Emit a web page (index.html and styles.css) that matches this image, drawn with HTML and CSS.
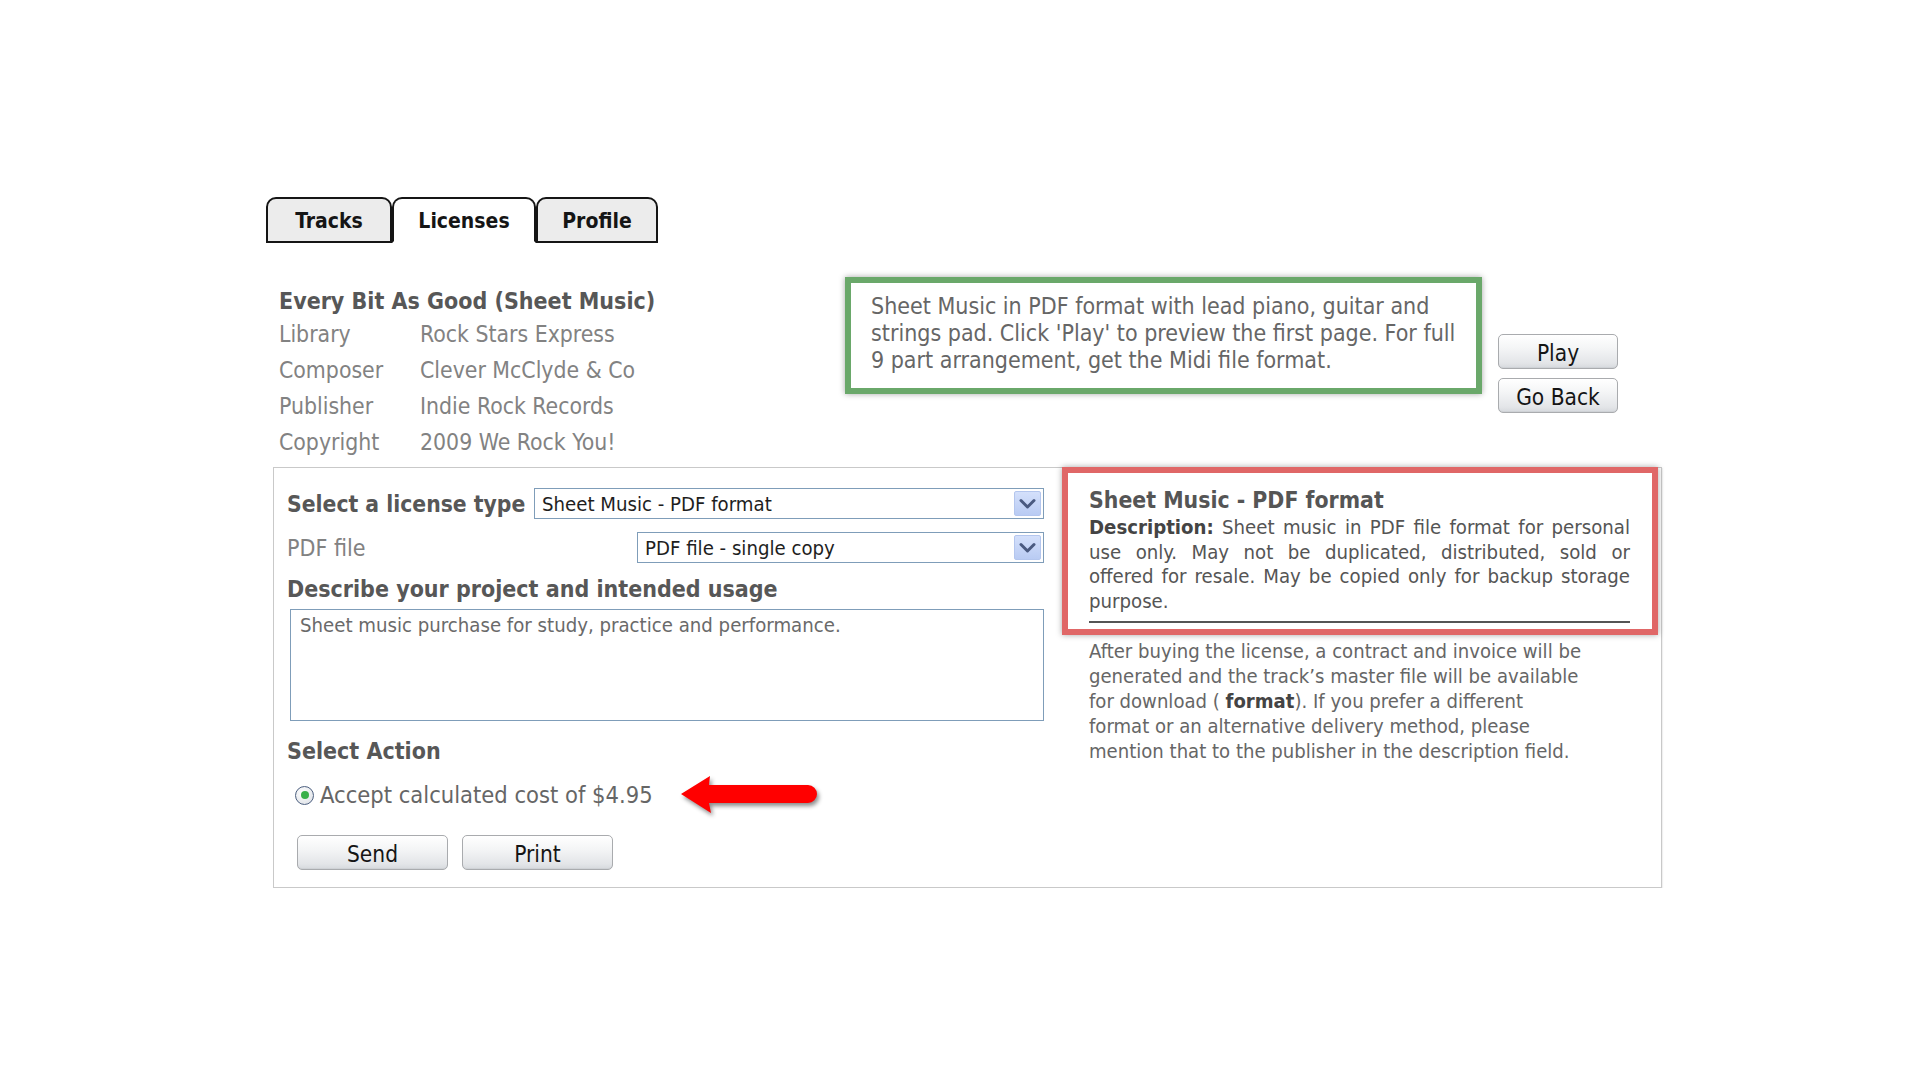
FILE: index.html
```html
<!DOCTYPE html>
<html lang="en">
<head>
<meta charset="utf-8">
<title>Licenses</title>
<link rel="stylesheet" href="styles.css">
</head>
<body>
<div class="page">
  <div class="tabs">
    <div class="tab tab-tracks">Tracks</div>
    <div class="tab tab-licenses active">Licenses</div>
    <div class="tab tab-profile">Profile</div>
  </div>

  <div class="top">
    <div class="info">
      <div class="title">Every Bit As Good (Sheet Music)</div>
      <div class="row"><span class="lbl">Library</span><span class="val">Rock Stars Express</span></div>
      <div class="row"><span class="lbl">Composer</span><span class="val">Clever McClyde &amp; Co</span></div>
      <div class="row"><span class="lbl">Publisher</span><span class="val">Indie Rock Records</span></div>
      <div class="row"><span class="lbl">Copyright</span><span class="val">2009 We Rock You!</span></div>
    </div>
    <div class="green-box">
      <div class="nl">Sheet Music in PDF format with lead piano, guitar and</div>
      <div class="nl">strings pad. Click 'Play' to preview the first page. For full</div>
      <div class="nl">9 part arrangement, get the Midi file format.</div>
    </div>
    <div class="side-buttons">
      <button class="btn btn-side">Play</button>
      <button class="btn btn-side">Go Back</button>
    </div>
  </div>

  <div class="panel">
    <div class="form">
      <div class="frow">
        <span class="flabel">Select a license type</span>
        <div class="select select-license">
          <span class="select-text">Sheet Music - PDF format</span>
          <span class="select-arrow"><svg width="17" height="12" viewBox="0 0 17 12"><path d="M2 2.5 L8.5 9 L15 2.5" fill="none" stroke="#4a5a80" stroke-width="3" stroke-linecap="round" stroke-linejoin="round"/></svg></span>
        </div>
      </div>
      <div class="frow frow-2">
        <span class="plabel">PDF file</span>
        <div class="select select-pdf">
          <span class="select-text">PDF file - single copy</span>
          <span class="select-arrow"><svg width="17" height="12" viewBox="0 0 17 12"><path d="M2 2.5 L8.5 9 L15 2.5" fill="none" stroke="#4a5a80" stroke-width="3" stroke-linecap="round" stroke-linejoin="round"/></svg></span>
        </div>
      </div>
      <div class="heading heading-describe">Describe your project and intended usage</div>
      <div class="textarea">Sheet music purchase for study, practice and performance.</div>
      <div class="heading heading-action">Select Action</div>
      <div class="radio-row">
        <span class="radio"><span class="radio-dot"></span></span>
        <span class="radio-text">Accept calculated cost of $4.95</span>
        <svg class="arrow" width="140" height="40" viewBox="0 0 140 40"><path d="M2 19 L31 1 L30 10 L129 10 A9 9 0 0 1 129 28 L30 28 L32 38 Z" fill="#ff0000"/></svg>
      </div>
      <div class="actions">
        <button class="btn btn-action">Send</button>
        <button class="btn btn-action">Print</button>
      </div>
    </div>
    <div class="details">
      <div class="red-box">
        <div class="red-title">Sheet Music - PDF format</div>
        <div class="desc">
          <div class="jl"><b>Description:</b> Sheet music in PDF file format for personal</div>
          <div class="jl">use only. May not be duplicated, distributed, sold or</div>
          <div class="jl">offered for resale. May be copied only for backup storage</div>
          <div class="jl last">purpose.</div>
        </div>
        <div class="rule"></div>
      </div>
      <div class="after">
        <div class="nl">After buying the license, a contract and invoice will be</div>
        <div class="nl">generated and the track’s master file will be available</div>
        <div class="nl">for download ( <b>format</b>). If you prefer a different</div>
        <div class="nl">format or an alternative delivery method, please</div>
        <div class="nl">mention that to the publisher in the description field.</div>
      </div>
    </div>
  </div>
</div>
</body>
</html>
```

FILE: styles.css
```css
* { box-sizing: border-box; }
html, body { margin: 0; padding: 0; background: #fff; }
body {
  font-family: "DejaVu Sans Condensed", "DejaVu Sans", sans-serif;
  font-stretch: semi-condensed;
  color: #666;
}
.page { padding: 197px 0 0 266px; }

.tabs { display: flex; height: 46px; }
.tab {
  height: 46px;
  border: 2px solid #151515;
  border-radius: 10px 10px 0 0;
  background: #ececec;
  font-weight: bold;
  font-size: 21px;
  color: #151515;
  display: flex;
  align-items: center;
  justify-content: center;
  padding-top: 2px;
}
.tab-tracks { width: 126px; }
.tab-licenses { width: 144px; }
.tab-profile { width: 122px; }
.tab.active { background: #fff; border-bottom-color: transparent; }

.top { display: flex; align-items: flex-start; margin: 34px 0 0 13px; height: 183px; }
.info { width: 566px; padding-top: 9px; }
.title { font-size: 23px; font-weight: bold; color: #575757; line-height: 30px; white-space: nowrap; }
.row { display: flex; height: 36px; line-height: 36px; font-size: 22.8px; color: #828282; }
.lbl { width: 141px; }
.nl { white-space: nowrap; }

.green-box {
  width: 637px;
  height: 117px;
  border: 6px solid #6aa86a;
  box-shadow: 0 0 6px rgba(0, 0, 0, 0.35);
  padding: 10px 0 0 20px;
  font-size: 23px;
  line-height: 27px;
  color: #666;
}
.side-buttons { display: flex; flex-direction: column; gap: 9px; margin: 57px 0 0 16px; }

.btn {
  font-family: "DejaVu Sans Condensed", "DejaVu Sans", sans-serif;
  font-stretch: semi-condensed;
  color: #151515;
  border: 1px solid #a9abae;
  border-radius: 5px;
  background: linear-gradient(#ffffff 0%, #f4f5f6 40%, #e3e5e8 85%, #d6d9dd 100%);
  box-shadow: inset 0 -1px 0 #cfd2d6;
  padding: 0;
  cursor: default;
}
.btn-side { width: 120px; height: 35px; font-size: 22.5px; padding-top: 2px; }

.panel {
  margin: 7px 0 0 7px;
  width: 1389px;
  height: 421px;
  border: 1px solid #c9c9c9;
  box-shadow: 1px 1px 1px rgba(0, 0, 0, 0.06);
  display: flex;
  padding: 0 0 0 13px;
}
.form { width: 757px; padding-top: 20px; }
.frow { display: flex; align-items: center; justify-content: space-between; height: 31px; }
.frow-2 { margin-top: 13px; }
.flabel { font-size: 22.7px; font-weight: bold; color: #575757; white-space: nowrap; }
.plabel { font-size: 23px; color: #828282; }
.select {
  height: 31px;
  border: 1px solid #7f9db9;
  background: #fff;
  display: flex;
  align-items: center;
  justify-content: space-between;
  padding: 0 2px 0 7px;
}
.select-license { width: 510px; }
.select-pdf { width: 407px; }
.select-text { font-size: 20.2px; color: #1e1e1e; white-space: nowrap; }
.select-arrow {
  width: 27px;
  height: 25px;
  border: 1px solid #b4c6ee;
  border-radius: 2px;
  background: linear-gradient(#d4e0fb, #b9cbf3);
  display: flex;
  align-items: center;
  justify-content: center;
}
.heading { font-size: 23px; font-weight: bold; color: #575757; line-height: 30px; white-space: nowrap; }
.heading-describe { margin-top: 11px; }
.textarea {
  margin: 5px 0 0 3px;
  width: 754px;
  height: 112px;
  border: 1px solid #7f9db9;
  padding: 3px 9px;
  font-size: 20.2px;
  color: #6a6a6a;
  line-height: 24px;
}
.heading-action { margin-top: 15px; }
.radio-row { display: flex; align-items: center; height: 34px; margin-top: 12px; }
.radio {
  width: 19px;
  height: 19px;
  margin-left: 8px;
  border-radius: 50%;
  border: 1.5px solid #4d6080;
  background: radial-gradient(circle at 40% 35%, #ffffff, #d9dde3);
  display: flex;
  align-items: center;
  justify-content: center;
}
.radio-dot { width: 8px; height: 8px; border-radius: 50%; background: #39b04a; }
.radio-text { margin-left: 6px; font-size: 23.5px; color: #666; white-space: nowrap; }
.arrow { margin-left: 26px; filter: drop-shadow(2px 3px 2px rgba(0, 0, 0, 0.45)); }
.actions { display: flex; gap: 14px; margin: 23px 0 0 10px; }
.btn-action { width: 151px; height: 35px; font-size: 22.5px; padding-top: 2px; }

.details { margin-left: 18px; width: 596px; margin-top: -1px; }
.red-box {
  border: 6px solid #e06767;
  box-shadow: 0 0 6px rgba(0, 0, 0, 0.35);
  padding: 13px 22px 3px 21px;
  height: 168px;
}
.red-title { font-size: 22.8px; font-weight: bold; color: #555; line-height: 29px; white-space: nowrap; }
.desc { font-size: 20.2px; line-height: 24.5px; color: #555; }
.desc b { color: #444; }
.jl { text-align: justify; text-align-last: justify; white-space: nowrap; }
.jl.last { text-align-last: left; }
.rule { height: 2px; background: #555; margin-top: 8px; }
.after { padding: 4px 0 0 27px; font-size: 20.1px; line-height: 25px; color: #666; }
.after b { color: #444; }
```
